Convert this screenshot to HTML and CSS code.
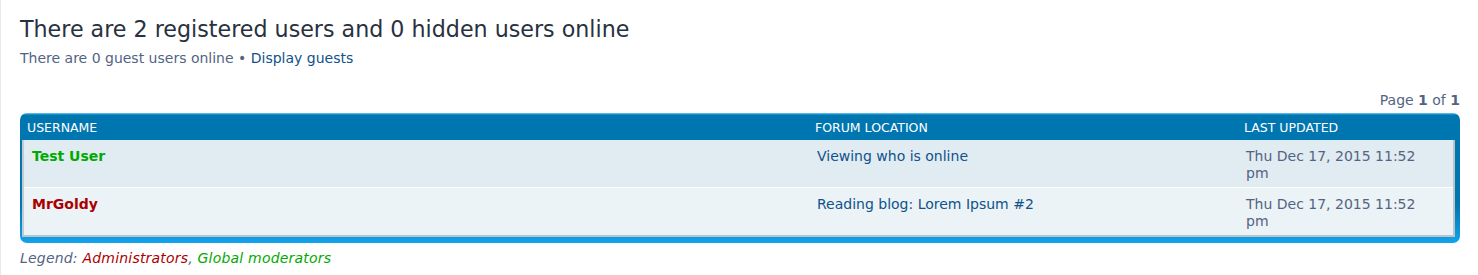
FILE: index.html
```html
<!DOCTYPE html>
<html lang="en">
<head>
  <meta charset="UTF-8">
  <meta name="viewport" content="width=device-width, initial-scale=1.0">
  <title>Who is online</title>
  <link rel="stylesheet" href="styles.css">
</head>
<body>
  <div class="wrap">
    <h2 class="title">There are 2 registered users and 0 hidden users online</h2>
    <p class="sub">There are 0 guest users online &bull; <a href="#">Display guests</a></p>

    <div class="pagination">Page <strong>1</strong> of <strong>1</strong></div>

    <div class="forumbg">
      <table class="table1">
        <colgroup>
          <col class="col-name">
          <col class="col-info">
          <col class="col-active">
        </colgroup>
        <thead>
          <tr>
            <th class="name">Username</th>
            <th class="info">Forum location</th>
            <th class="active">Last updated</th>
          </tr>
        </thead>
        <tbody>
          <tr class="bg2">
            <td class="name"><a href="#" class="user mod">Test User</a></td>
            <td class="info"><a href="#">Viewing who is online</a></td>
            <td class="active">Thu Dec 17, 2015 11:52 pm</td>
          </tr>
          <tr class="bg1">
            <td class="name"><a href="#" class="user admin">MrGoldy</a></td>
            <td class="info"><a href="#">Reading blog: Lorem Ipsum #2</a></td>
            <td class="active">Thu Dec 17, 2015 11:52 pm</td>
          </tr>
        </tbody>
      </table>
    </div>

    <p class="legend">Legend: <a href="#" class="admin">Administrators</a>, <a href="#" class="mod">Global moderators</a></p>
  </div>
</body>
</html>
```

FILE: styles.css
```css
html, body {
  margin: 0;
  padding: 0;
  background-color: #fff;
}
body {
  font-family: "DejaVu Sans", Verdana, sans-serif;
  color: #536482;
}
a {
  color: #105289;
  text-decoration: none;
}
.wrap {
  border-left: 1px solid #e6e9ed;
  padding: 0 18px 0 19px;
  min-height: 275px;
  box-sizing: border-box;
}
.title {
  margin: 0;
  padding-top: 15px;
  font-size: 22.2px;
  line-height: 28px;
  font-weight: normal;
  color: #28313f;
}
.sub {
  margin: 7px 0 0;
  font-size: 14px;
  line-height: 16px;
}
.pagination {
  margin-top: 26px;
  text-align: right;
  font-size: 14px;
  line-height: 16px;
}
.pagination strong {
  color: #536482;
}
.forumbg {
  margin-top: 5px;
  padding: 0 5px 6px 2px;
  border-radius: 7px;
  background-color: #0076b1;
  background-image: linear-gradient(to bottom, #6aceff 0, #0076b1 2px, #0076b1 92px, #12a3eb 100%);
}
.table1 {
  width: 100%;
  border-collapse: collapse;
  table-layout: fixed;
}
.col-name { width: 788px; }
.col-info { width: 429px; }
.table1 th {
  text-align: left;
  font-weight: normal;
  text-transform: uppercase;
  color: #fff;
  font-size: 12.5px;
  line-height: 14px;
  padding: 8px 4px 5px;
}
.table1 th.name { padding-left: 4px; }
.table1 tbody {
  border-left: 2px solid #c3ccd4;
  border-right: 2px solid #bcc3c9;
  border-bottom: 2px solid #bcc3c9;
}
.table1 tbody tr + tr td {
  border-top: 1px solid #fff;
}
.table1 td {
  vertical-align: top;
  font-size: 14px;
  line-height: 17px;
  padding: 8px 6px 5px;
}
.table1 td.name { padding-left: 8px; }
.table1 td.active {
  color: #536482;
  padding-right: 30px;
}
.bg1 { background-color: #ecf3f7; }
.bg2 { background-color: #e1ebf2; }
.user {
  font-weight: bold;
}
.mod { color: #00aa00; }
.admin { color: #aa0000; }
.legend {
  margin: 7px 0 0;
  font-size: 14px;
  line-height: 16px;
  font-style: italic;
  letter-spacing: 0.2px;
}
```
